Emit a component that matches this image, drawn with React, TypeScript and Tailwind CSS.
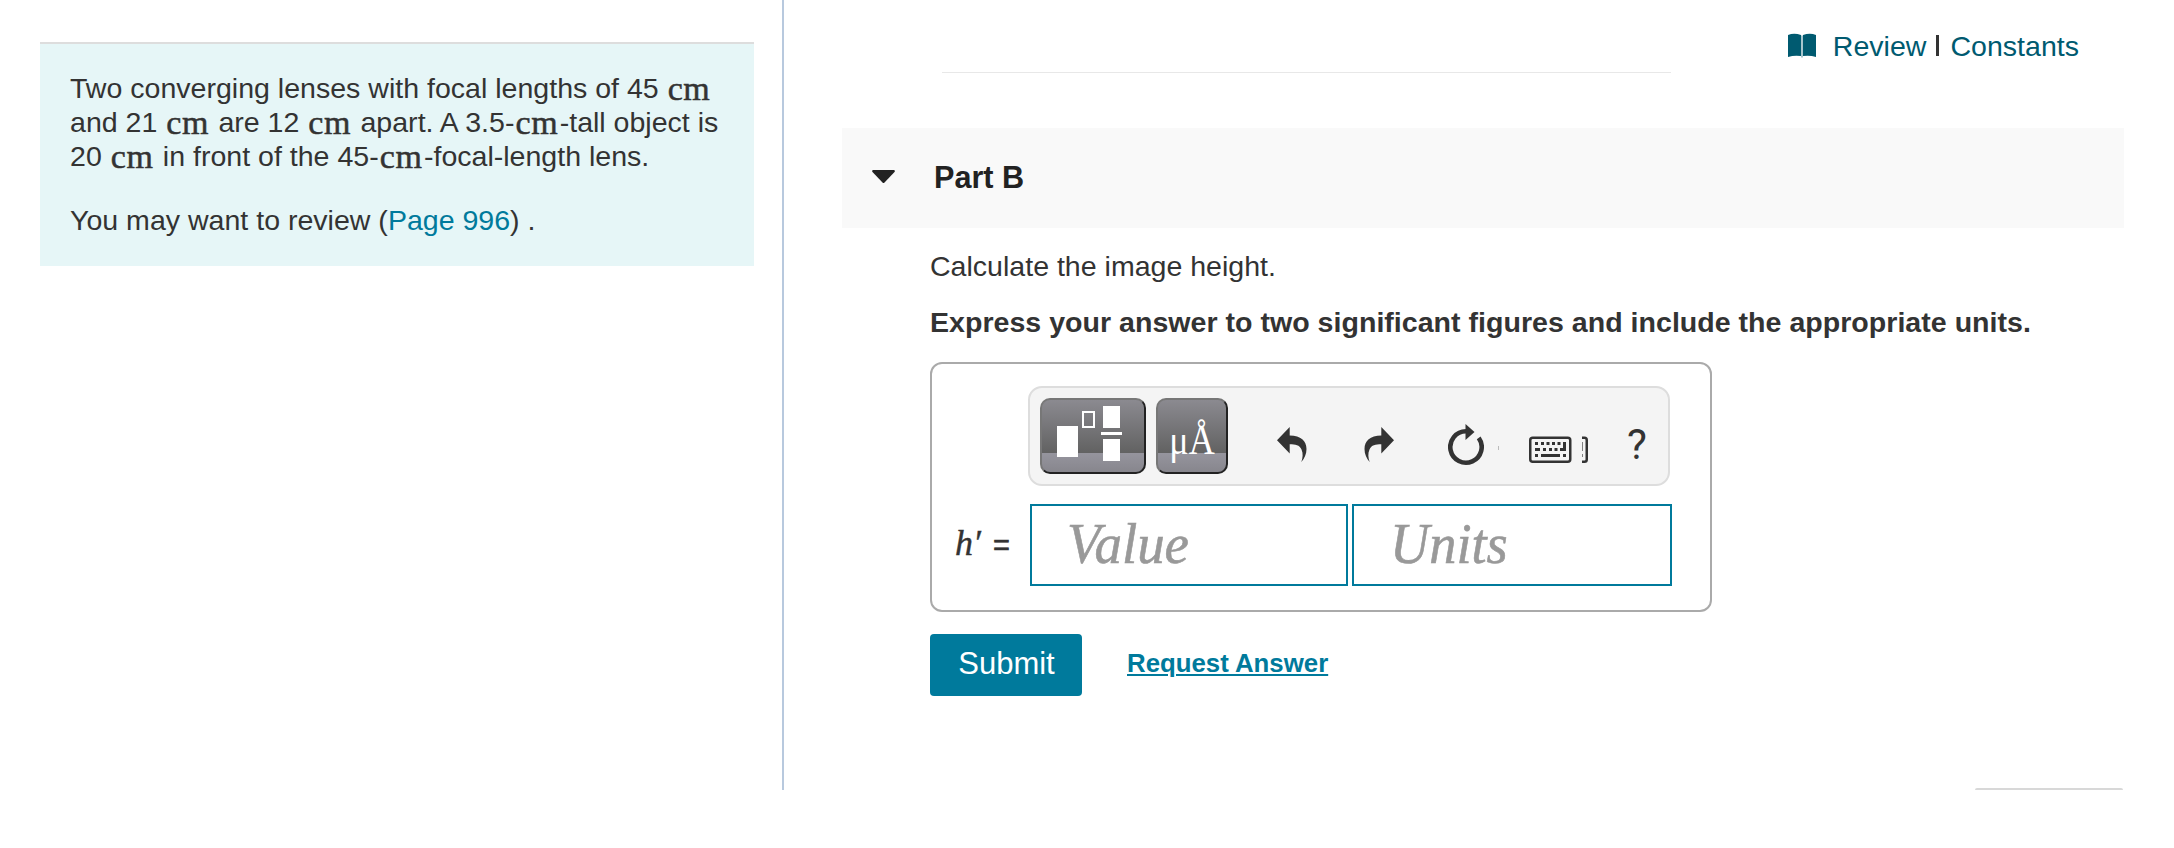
import React from 'react';

interface IconProps {
    className?: string;
}

const BookIcon: React.FC<IconProps> = ({ className }) => (
    <svg viewBox="0 0 28 26" className={className} fill="#005a70">
        <path d="M0 2Q6 -0.500 13 2V23Q6 22 0 24Z" />
        <path d="M15 2Q22 -0.500 28 2V24Q22 22 15 23Z" />
        <path d="M13 2.500H15V24.500H13Z" opacity="0.35" />
    </svg>
);

const UndoIcon: React.FC<IconProps> = ({ className }) => (
    <svg viewBox="0 0 30 36" className={className} fill="#333">
        <path d="M0 13.3L12.7 0V8.5C24 8.5 29.5 14 29.5 22C29.5 27 27.5 31.5 24.3 35C25.8 31 26.3 26.5 24.5 22.5C22.5 18 18.5 17.3 12.7 17.3V26.5Z" />
    </svg>
);

const ResetIcon: React.FC<IconProps> = ({ className }) => (
    <svg viewBox="0 0 36 42" className={className}>
        <path d="M18 7.3A15.7 15.7 0 1 0 30.7 13.8" fill="none" stroke="#333" strokeWidth="4.6" />
        <path d="M17.5 0L26.5 8L17.5 16Z" fill="#333" />
    </svg>
);

const KeyboardIcon: React.FC<IconProps> = ({ className }) => (
    <svg viewBox="0 0 60 28" className={className} fill="#333">
        <rect x="1.25" y="1.75" width="40" height="24" rx="2.5" fill="none" stroke="#333" strokeWidth="2.5" />
        <path d="M6 6h3v3h-3zM12 6h3v3h-3zM17.500 6h3v3h-3zM23 6h3v3h-3zM28.500 6h3v3h-3zM34 6h3v9h-6v-3h3z" />
        <path d="M6 12h5v3h-5zM14 12h3v3h-3zM20 12h3v3h-3zM25.500 12h3v3h-3z" />
        <path d="M6 18h3v3h-3zM12 18h19v3h-19zM34 18h3v3h-3z" />
        <path d="M53 1.750H55.500Q57.750 1.750 57.750 4V23.500Q57.750 25.750 55.500 25.750H53" fill="none" stroke="#333" strokeWidth="2.5" />
        <path d="M53 6h1v9h-1zM53 18h1v3h-1z" opacity="0.6" />
    </svg>
);

const Unit: React.FC = () => (
    <span className="mr-[1.5px] ml-px align-[-2px] font-['Liberation_Serif',serif] text-[34px] leading-[0] tracking-[0.6px] [-webkit-text-stroke:0.5px_#333]">
        cm
    </span>
);

const toolButton =
    'h-[76px] shrink-0 rounded-[10px] border-2 border-t-[#777] border-l-[#777] border-r-[#222] border-b-[#222] bg-[linear-gradient(#8b8a90,#626262_73%,#96959e_73%,#87868d)]';

const answerField =
    "h-[82px] border-2 border-[#007a9c] font-['Liberation_Serif',serif] text-[56px] leading-[77px] text-[#999] italic [-webkit-text-stroke:0.6px_#999]";

const ProblemPanel: React.FC = () => (
    <section className="h-[224px] w-[714px] border-t-2 border-[#ddd] bg-[#e6f6f7] pt-[27px] pl-[30px] text-[28.56px] leading-[34px] whitespace-nowrap text-[#333]">
        <p>
            Two converging lenses with focal lengths of 45 <Unit />
            <br />
            and 21 <Unit /> are 12 <Unit /> apart. A 3.5-<Unit />-tall object is
            <br />
            20 <Unit /> in front of the 45-<Unit />-focal-length lens.
        </p>
        <p className="mt-[30px]">
            You may want to review (<a className="text-[#007a9c]">Page 996</a>) .
        </p>
    </section>
);

const Toolbar: React.FC = () => (
    <div className="flex h-[100px] w-[642px] rounded-[14px] border-2 border-[#ddd] bg-[#f4f4f4] pt-[10px] pl-[10px]">
        <button className={`${toolButton} w-[106px]`}>
            <svg viewBox="0 0 102 72" className="h-[72px] w-[102px]" fill="#fff">
                <rect x="15" y="26" width="21" height="31" />
                <rect x="41" y="12" width="11" height="15" fill="none" stroke="#fff" strokeWidth="2" />
                <rect x="61" y="6" width="17" height="22" />
                <rect x="59" y="32" width="21" height="3" />
                <rect x="61" y="39" width="17" height="22" />
            </svg>
        </button>
        <button className={`${toolButton} ml-[10px] w-[72px] pt-[7px] font-['Liberation_Serif',serif] text-[36px] leading-none text-white`}>
            <span className="inline-block scale-y-115">μÅ</span>
        </button>
        <UndoIcon className="mt-[29px] ml-[49px] h-9 w-[30px]" />
        <UndoIcon className="mt-[29px] ml-[57px] h-9 w-[30px] -scale-x-100" />
        <ResetIcon className="mt-[26px] ml-[54px] h-[42px] w-9" />
        <span className="mt-[48px] ml-[14px] h-1 w-px bg-[#bbb]" />
        <KeyboardIcon className="mt-[38px] ml-[30px] h-7 w-[60px]" />
        <span className="mt-[23px] ml-[38px] font-['Roboto',sans-serif] text-[42px] leading-[48px] text-[#333]">?</span>
    </div>
);

const AnswerBox: React.FC = () => (
    <div className="mt-[24px] flex h-[250px] w-[782px] flex-col rounded-xl border-2 border-[#aaa] pt-[22px]">
        <div className="pl-[96px]">
            <Toolbar />
        </div>
        <div className="mt-[18px] flex text-[#333]">
            <div className="flex w-[98px] items-baseline pt-[21px] pl-[23px] leading-none">
                <span className="w-[38px] font-['Liberation_Serif',serif] text-[36px] italic [-webkit-text-stroke:0.4px_#333]">h′</span>
                <span className="text-[29px] [-webkit-text-stroke:0.6px_#333]">=</span>
            </div>
            <div className={`${answerField} w-[318px] pl-[35px]`}>
                <span className="inline-block origin-left scale-x-98">Value</span>
            </div>
            <div className={`${answerField} ml-1 w-[320px] pl-[36px]`}>
                <span className="inline-block origin-left scale-x-97">Units</span>
            </div>
        </div>
    </div>
);

const App: React.FC = () => {
    return (
        <div className="flex h-[848px] w-[2174px] bg-white font-['Liberation_Sans',Arial,sans-serif]">
            <aside className="h-[790px] w-[784px] border-r-2 border-[#b8c9de] pt-[42px] pl-[40px]">
                <ProblemPanel />
            </aside>
            <main className="flex h-[790px] w-[1340px] flex-col pl-[58px]">
                <header className="flex h-[72px] items-start justify-end pt-[30px] pr-[45px] text-[28.56px] leading-8 text-[#005a70]">
                    <BookIcon className="mt-[3px] mr-[17px] h-[26px] w-7" />
                    <a>Review</a>
                    <span className="mt-[5px] mr-[11px] ml-[10px] h-[21px] w-[3px] bg-[#333]" />
                    <a>Constants</a>
                </header>
                <hr className="ml-[100px] w-[729px] border-[#e8e8e8]" />
                <div className="mt-[55px] flex h-[100px] shrink-0 items-center bg-[#f9f9f9] pb-[3px] pl-[30px]">
                    <svg viewBox="0 0 23 13" className="h-[13px] w-[23px]" fill="#222">
                        <path d="M1 0H22Q23.500 0.500 22.500 2L12.500 12.500Q11.500 13.500 10.500 12.500L0.500 2Q-0.500 0.500 1 0Z" />
                    </svg>
                    <h2 className="mt-0.5 ml-[39px] text-[30.6px] font-bold text-[#222]">Part B</h2>
                </div>
                <div className="pt-[22px] pl-[88px] text-[28.56px] leading-8 text-[#333]">
                    <p>Calculate the image height.</p>
                    <p className="mt-[24px] font-bold tracking-[0.02px]">
                        Express your answer to two significant figures and include the appropriate units.
                    </p>
                    <AnswerBox />
                    <div className="mt-[22px] flex">
                        <button className="h-[62px] w-[152px] rounded bg-[#007a9c] pb-[3px] pl-px text-[31px] text-white">Submit</button>
                        <a className="mt-[13px] ml-[45px] text-[25.8px] font-bold text-[#007a9c] underline decoration-2 underline-offset-2">
                            Request Answer
                        </a>
                    </div>
                </div>
                <div className="mt-auto mr-px ml-auto h-0.5 w-[148px] rounded-t-sm bg-[#d8d8d8]" />
            </main>
        </div>
    );
};

export default App;
